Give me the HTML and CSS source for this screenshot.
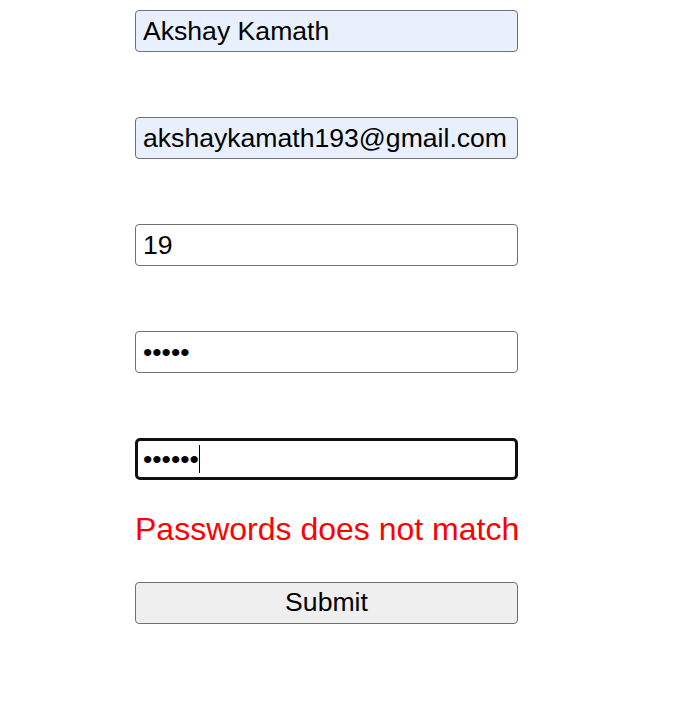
FILE: index.html
```html
<!DOCTYPE html>
<html lang="en">
<head>
<meta charset="utf-8">
<title>Form</title>
<link rel="stylesheet" href="styles.css">
</head>
<body>
<form class="signup">
  <input class="field autofilled" type="text" value="Akshay Kamath">
  <input class="field autofilled" type="email" value="akshaykamath193@gmail.com">
  <input class="field" type="text" value="19">
  <input class="field" type="password" value="12345">
  <div class="field-wrap">
    <input class="field focused" type="password" value="123456">
    <span class="caret"></span>
  </div>
  <p class="error">Passwords does not match</p>
  <button class="submit" type="button">Submit</button>
</form>
</body>
</html>
```
FILE: styles.css
```css
html, body {
  margin: 0;
  padding: 0;
  background: #ffffff;
}

.signup {
  display: flex;
  flex-direction: column;
  gap: 65px;
  width: 383px;
  padding: 10px 0 0 135px;
  font-family: "Liberation Sans", Arial, sans-serif;
}

.field {
  box-sizing: border-box;
  display: block;
  width: 383px;
  height: 42px;
  margin: 0;
  padding: 0 6px 0 7px;
  border: 1px solid #707070;
  border-radius: 4px;
  background: #ffffff;
  color: #000000;
  font-family: "Liberation Sans", Arial, sans-serif;
  font-size: 26.6px;
  outline: none;
}

.field.autofilled {
  background: #e8f0fe;
}

.field-wrap {
  position: relative;
  height: 42px;
}

.field.focused {
  border: 3px solid #101010;
  border-radius: 5px;
  padding-left: 5px;
}

.caret {
  position: absolute;
  left: 64px;
  top: 7px;
  width: 1px;
  height: 28px;
  background: #000000;
}

.error {
  margin: -34px 0 0 0;
  color: #ff0000;
  font-size: 32px;
  line-height: 36.8px;
  white-space: nowrap;
}

.submit {
  box-sizing: border-box;
  width: 383px;
  height: 42px;
  margin: -31px 0 0 0;
  padding: 0;
  border: 1px solid #707070;
  border-radius: 4px;
  background: #efefef;
  color: #000000;
  font-family: "Liberation Sans", Arial, sans-serif;
  font-size: 26.6px;
}
```
